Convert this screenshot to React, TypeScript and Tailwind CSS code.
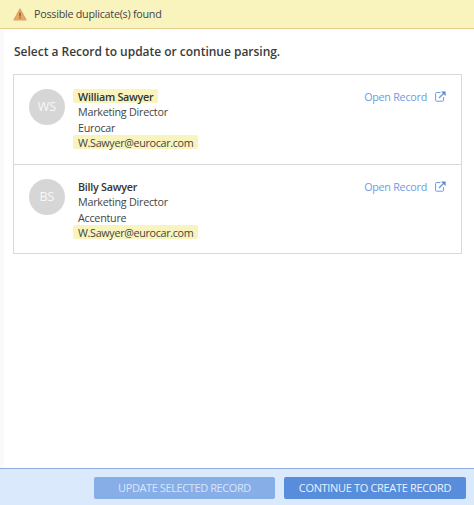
import clsx from "clsx";
import React from "react";

type RecordItem = {
    initials: string;
    name: string;
    title: string;
    company: string;
    email: string;
    nameMatches: boolean;
};

const records: RecordItem[] = [
    {
        initials: "WS",
        name: "William Sawyer",
        title: "Marketing Director",
        company: "Eurocar",
        email: "W.Sawyer@eurocar.com",
        nameMatches: true,
    },
    {
        initials: "BS",
        name: "Billy Sawyer",
        title: "Marketing Director",
        company: "Accenture",
        email: "W.Sawyer@eurocar.com",
        nameMatches: false,
    },
];

const WarningIcon = () => (
    <svg width="14" height="13" viewBox="0 0 14 13">
        <path d="M7 1 L13 12 H1 Z" fill="#e5a868" stroke="#dda263" strokeWidth="1.2" strokeLinejoin="round" />
        <path d="M7 4.4 V8.4 M7 9.3 V10.5" stroke="#7d5028" strokeWidth="1.2" />
    </svg>
);

const OpenIcon = () => (
    <svg width="11" height="11" viewBox="0 0 11 11" fill="none" stroke="#6f9be0">
        <path d="M5.5 1.5 H1.6 Q0.6 1.5 0.6 2.5 V9.2 Q0.6 10.2 1.6 10.2 H7.6 Q8.6 10.2 8.6 9.2 V6" />
        <path d="M4 7 L8.8 2.2" strokeWidth="1.4" />
        <path d="M6 0.4 H10.6 V5 Z" fill="#6088d2" stroke="none" />
    </svg>
);

const RecordRow = ({ record }: { record: RecordItem }) => (
    <div className="flex h-[90px] items-start border-b border-[#d9d9d9] pt-[14px] pl-[15px] pr-[15px] last:h-[88px] last:border-b-0">
        <div className="flex h-9 w-9 shrink-0 items-center justify-center rounded-full bg-[#d6d6d6] text-[12.5px] text-[#f8f8f8]">
            {record.initials}
        </div>
        <div className="ml-2 flex flex-1 flex-col items-start gap-[1.4px] text-[10.75px] leading-[12px] tracking-[-0.25px] text-[#444]">
            <span className={clsx("rounded-[2px] px-[5px] pt-[2px] font-semibold text-[#333]", record.nameMatches && "bg-[#f9f4bd]")}>
                {record.name}
            </span>
            <span className="px-[5px] pt-[2px]">{record.title}</span>
            <span className="px-[5px] pt-[2px]">{record.company}</span>
            <span className="rounded-[2px] bg-[#f9f4bd] px-[5px] pt-[2px] tracking-[-0.32px]">{record.email}</span>
        </div>
        <a className="flex items-center gap-2 text-[10.75px] leading-[14px] tracking-[-0.25px] text-[#6f9be0]">
            <span className="pt-px">Open Record</span>
            <OpenIcon />
        </a>
    </div>
);

const App = () => {
    return (
        <div className="flex h-screen flex-col bg-white font-['Open_Sans',sans-serif] text-[#444]">
            <header className="flex h-[29px] shrink-0 items-center gap-[7px] border-b border-[#e6cd8c] bg-[#f9f3bd] pl-[13px] text-[10.75px] tracking-[-0.25px]">
                <WarningIcon />
                <span>Possible duplicate(s) found</span>
            </header>
            <main className="flex-1 border-l-4 border-[#fafafa] pr-3 pl-[9px]">
                <h1 className="pt-[14px] pl-px text-[12px] leading-[18px] font-semibold tracking-[-0.02px] text-[#3a3a3a]">
                    Select a Record to update or continue parsing.
                </h1>
                <div className="mt-[13px] border border-[#d9d9d9]">
                    {records.map((record) => (
                        <RecordRow key={record.initials} record={record} />
                    ))}
                </div>
            </main>
            <footer className="flex h-[37px] shrink-0 items-start justify-end gap-[9px] border-t border-[#8facdf] bg-[#dbe9fc] pt-2 pr-2 text-[11px]">
                <button className="h-[22px] w-[181px] rounded-[2px] bg-[#88aee8] tracking-[-0.4px] text-[#d7e6fb]">UPDATE SELECTED RECORD</button>
                <button className="h-[22px] w-[182px] rounded-[2px] bg-[#588ddb] tracking-[-0.33px] text-[#eaf2ff]">CONTINUE TO CREATE RECORD</button>
            </footer>
        </div>
    );
};

export default App;
